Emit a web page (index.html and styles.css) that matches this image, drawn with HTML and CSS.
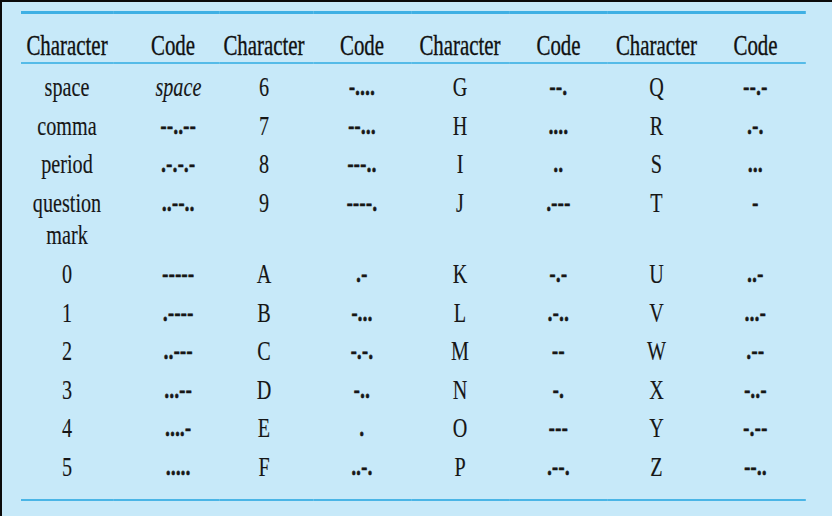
FILE: index.html
```html
<!DOCTYPE html>
<html lang="en">
<head>
<meta charset="utf-8">
<title>Morse code table</title>
<link rel="stylesheet" href="styles.css">
</head>
<body>
<div class="frame">
  <table class="morse">
    <colgroup>
      <col class="c1"><col class="c2"><col class="c3"><col class="c4">
      <col class="c5"><col class="c6"><col class="c7"><col class="c8">
    </colgroup>
    <thead>
      <tr>
        <th>Character</th><th class="code-h">Code</th>
        <th class="ch2">Character</th><th>Code</th>
        <th>Character</th><th>Code</th>
        <th>Character</th><th>Code</th>
      </tr>
    </thead>
    <tbody>
      <tr class="first">
        <td>space</td><td class="code col2"><em class="word">space</em></td>
        <td class="ch2">6</td><td class="code">-....</td>
        <td>G</td><td class="code">--.</td>
        <td>Q</td><td class="code">--.-</td>
      </tr>
      <tr>
        <td>comma</td><td class="code col2">--..--</td>
        <td class="ch2">7</td><td class="code">--...</td>
        <td>H</td><td class="code">....</td>
        <td>R</td><td class="code">.-.</td>
      </tr>
      <tr>
        <td>period</td><td class="code col2">.-.-.-</td>
        <td class="ch2">8</td><td class="code">---..</td>
        <td>I</td><td class="code">..</td>
        <td>S</td><td class="code">...</td>
      </tr>
      <tr class="tall">
        <td>question<br>mark</td><td class="code col2">..--..</td>
        <td class="ch2">9</td><td class="code">----.</td>
        <td>J</td><td class="code">.---</td>
        <td>T</td><td class="code">-</td>
      </tr>
      <tr>
        <td>0</td><td class="code col2">-----</td>
        <td class="ch2">A</td><td class="code">.-</td>
        <td>K</td><td class="code">-.-</td>
        <td>U</td><td class="code">..-</td>
      </tr>
      <tr>
        <td>1</td><td class="code col2">.----</td>
        <td class="ch2">B</td><td class="code">-...</td>
        <td>L</td><td class="code">.-..</td>
        <td>V</td><td class="code">...-</td>
      </tr>
      <tr>
        <td>2</td><td class="code col2">..---</td>
        <td class="ch2">C</td><td class="code">-.-.</td>
        <td>M</td><td class="code">--</td>
        <td>W</td><td class="code">.--</td>
      </tr>
      <tr>
        <td>3</td><td class="code col2">...--</td>
        <td class="ch2">D</td><td class="code">-..</td>
        <td>N</td><td class="code">-.</td>
        <td>X</td><td class="code">-..-</td>
      </tr>
      <tr>
        <td>4</td><td class="code col2">....-</td>
        <td class="ch2">E</td><td class="code">.</td>
        <td>O</td><td class="code">---</td>
        <td>Y</td><td class="code">-.--</td>
      </tr>
      <tr class="last">
        <td>5</td><td class="code col2">.....</td>
        <td class="ch2">F</td><td class="code">..-.</td>
        <td>P</td><td class="code">.--.</td>
        <td>Z</td><td class="code">--..</td>
      </tr>
    </tbody>
  </table>
</div>
</body>
</html>
```

FILE: styles.css
```css
html, body {
  margin: 0;
  padding: 0;
}
body {
  background: #c7e9f9;
  width: 832px;
  height: 516px;
  overflow: hidden;
  box-sizing: border-box;
  border-top: 2px solid #0b0b0b;
  border-left: 2px solid #0b0b0b;
  font-family: "Liberation Serif", "Times New Roman", serif;
  color: #161616;
}
.frame {
  padding: 9px 0 0 19px;
}
/* the table is laid out wide and condensed horizontally
   to reproduce the narrow book typeface */
.morse {
  width: 1090.3px;
  table-layout: fixed;
  border-collapse: collapse;
  border-top: 3px solid #3fb0e4;
  border-bottom: 2px solid #4ab5e6;
  transform: scaleX(0.72);
  transform-origin: 0 0;
}
.c1 { width: 127.8px; }
.c2 { width: 148.6px; }
.c3 { width: 129.2px; }
.c4 { width: 136.1px; }
.c5 { width: 136.1px; }
.c6 { width: 137.5px; }
.c7 { width: 134.7px; }
.c8 { width: 140.3px; }

th, td {
  padding: 0;
  text-align: center;
  vertical-align: middle;
}
th {
  font-weight: normal;
  font-size: 29px;
  line-height: 28px;
  height: 28px;
  padding-top: 17px;
  padding-bottom: 3px;
  border-bottom: 2px solid #55bbe8;
  color: #111;
  -webkit-text-stroke: 0.35px #111;
}
th.code-h { padding-left: 18px; }
.ch2 { padding-right: 7px; }
td {
  font-size: 28px;
  line-height: 32px;
  height: 38.6px;
  -webkit-text-stroke: 0.15px #161616;
}
td.col2 { padding-left: 33px; }
.first td { padding-top: 4px; }
.tall td { height: 67.7px; vertical-align: top; padding-top: 3.2px; }
.last td { padding-bottom: 12.7px; }
td.code {
  font-weight: bold;
  font-size: 25px;
  letter-spacing: 0.6px;
  -webkit-text-stroke: 0.7px #161616;
}
.word {
  font-weight: normal;
  font-size: 28px;
  letter-spacing: 0;
  -webkit-text-stroke: 0.15px #161616;
}
```
